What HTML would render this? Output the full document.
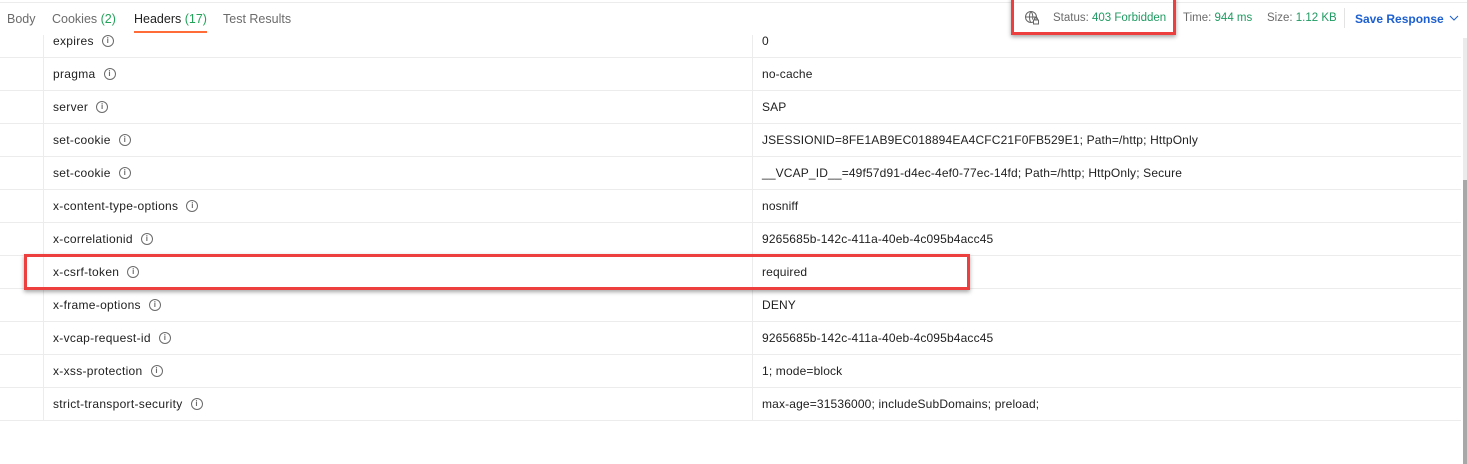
<!DOCTYPE html>
<html><head><style>
body{margin:0;width:1467px;height:464px;background:#fff;font-family:"Liberation Sans",sans-serif;font-size:12px;color:#212121;position:relative;overflow:hidden}
.a{position:absolute;white-space:nowrap}
.tab{top:12px;color:#6b6b6b;font-size:12.5px}
.g{color:#23a35a}
.hl{position:absolute;left:0;width:1461px;height:1px;background:#ececec}
.vl{position:absolute;width:1px;background:#ececec}
.k{left:53px;letter-spacing:0.3px}
.v{left:762px;letter-spacing:0.15px}
.i{display:inline-block;width:10px;height:10px;border:1px solid #6b6b6b;border-radius:50%;font-size:8px;line-height:10px;text-align:center;color:#6b6b6b;margin-left:8px;vertical-align:top;margin-top:1px;font-weight:bold;letter-spacing:0}
.box{position:absolute;border:3px solid #ee3f3f;box-shadow:0 2px 4px rgba(0,0,0,.35)}
.s{top:12px;font-size:11.5px;color:#6b6b6b}
</style></head><body>
<div class="hl" style="top:2px;width:1467px"></div>
<div class="a tab" style="left:7px">Body</div>
<div class="a tab" style="left:52px">Cookies <span class="g">(2)</span></div>
<div class="a tab" style="left:134px;color:#212121">Headers <span class="g">(17)</span></div>
<div class="a" style="left:134px;top:31px;width:73px;height:2px;background:#ff6c37"></div>
<div class="a tab" style="left:223px">Test Results</div>
<svg class="a" style="left:1024px;top:10px" width="16" height="16" viewBox="0 0 16 16" fill="none" stroke="#666" stroke-width="1"><circle cx="7" cy="7" r="5.5"/><path d="M1.5 7h11M7 1.5c-2 2-2 9 0 11M7 1.5c2 2 2 6 1.5 8"/><rect x="9.5" y="10" width="5" height="4" fill="#fff"/><path d="M10.5 10V9a1.5 1.5 0 0 1 3 0v1"/></svg>
<div class="a s" style="left:1053px">Status: <span style="color:#1f9a62">403 Forbidden</span></div>
<div class="a s" style="left:1183px">Time: <span style="color:#1f9a62">944 ms</span></div>
<div class="a s" style="left:1267px">Size: <span style="color:#1f9a62">1.12 KB</span></div>
<div class="a" style="left:1344px;top:8px;width:1px;height:20px;background:#e3e3e3"></div>
<div class="a" style="left:1355px;top:12px;font-size:12px;color:#1c5fd1;font-weight:bold">Save Response</div>
<svg class="a" style="left:1449px;top:14px" width="10" height="8" viewBox="0 0 10 8"><path d="M1 2l4 4 4-4" fill="none" stroke="#1c5fd1" stroke-width="1"/></svg>
<div class="box" style="left:1011px;top:-3px;width:159px;height:32px"></div>
<div class="a" style="left:1463px;top:38px;width:4px;height:142px;background:#ebebeb"></div>
<div class="a" style="left:1463px;top:180px;width:4px;height:284px;background:#a8a8a8"></div>
<div class="vl" style="left:43px;top:35px;height:386px"></div>
<div class="vl" style="left:752px;top:35px;height:386px"></div>
<div class="hl" style="top:57px"></div><div class="hl" style="top:90px"></div><div class="hl" style="top:123px"></div><div class="hl" style="top:156px"></div><div class="hl" style="top:189px"></div><div class="hl" style="top:222px"></div><div class="hl" style="top:255px"></div><div class="hl" style="top:288px"></div><div class="hl" style="top:321px"></div><div class="hl" style="top:354px"></div><div class="hl" style="top:387px"></div><div class="hl" style="top:420px"></div>
<div class="a k" style="top:34px">expires<span class="i">i</span></div><div class="a v" style="top:34px">0</div>
<div class="a k" style="top:67px">pragma<span class="i">i</span></div><div class="a v" style="top:67px">no-cache</div>
<div class="a k" style="top:100px">server<span class="i">i</span></div><div class="a v" style="top:100px">SAP</div>
<div class="a k" style="top:133px">set-cookie<span class="i">i</span></div><div class="a v" style="top:133px">JSESSIONID=8FE1AB9EC018894EA4CFC21F0FB529E1; Path=/http; HttpOnly</div>
<div class="a k" style="top:166px">set-cookie<span class="i">i</span></div><div class="a v" style="top:166px">__VCAP_ID__=49f57d91-d4ec-4ef0-77ec-14fd; Path=/http; HttpOnly; Secure</div>
<div class="a k" style="top:199px">x-content-type-options<span class="i">i</span></div><div class="a v" style="top:199px">nosniff</div>
<div class="a k" style="top:232px">x-correlationid<span class="i">i</span></div><div class="a v" style="top:232px">9265685b-142c-411a-40eb-4c095b4acc45</div>
<div class="a k" style="top:265px">x-csrf-token<span class="i">i</span></div><div class="a v" style="top:265px">required</div>
<div class="a k" style="top:298px">x-frame-options<span class="i">i</span></div><div class="a v" style="top:298px">DENY</div>
<div class="a k" style="top:331px">x-vcap-request-id<span class="i">i</span></div><div class="a v" style="top:331px">9265685b-142c-411a-40eb-4c095b4acc45</div>
<div class="a k" style="top:364px">x-xss-protection<span class="i">i</span></div><div class="a v" style="top:364px">1; mode=block</div>
<div class="a k" style="top:397px">strict-transport-security<span class="i">i</span></div><div class="a v" style="top:397px">max-age=31536000; includeSubDomains; preload;</div>
<div class="box" style="left:24px;top:254px;width:940px;height:30px"></div>
</body></html>
